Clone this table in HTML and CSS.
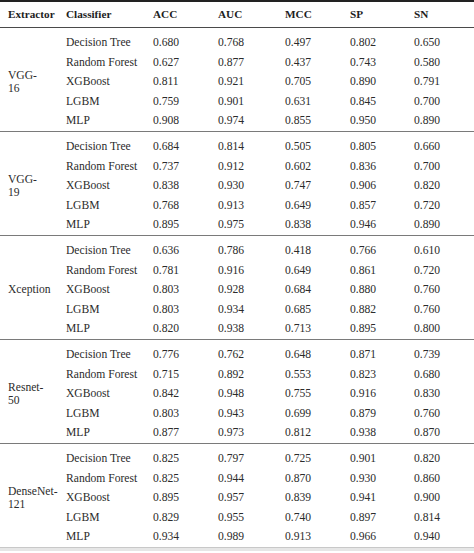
FILE: index.html
```html
<!DOCTYPE html>
<html>
<head>
<meta charset="utf-8">
<link rel="stylesheet" href="styles.css">
</head>
<body>
<div class="table">
  <div class="head">
    <div class="c ext">Extractor</div>
    <div class="c">Classifier</div>
    <div class="c">ACC</div>
    <div class="c">AUC</div>
    <div class="c">MCC</div>
    <div class="c">SP</div>
    <div class="c">SN</div>
  </div>

  <div class="section">
    <div class="c ext name">VGG-<br>16</div>
    <div class="c">Decision Tree</div><div class="c">0.680</div><div class="c">0.768</div><div class="c">0.497</div><div class="c">0.802</div><div class="c">0.650</div>
    <div class="c">Random Forest</div><div class="c">0.627</div><div class="c">0.877</div><div class="c">0.437</div><div class="c">0.743</div><div class="c">0.580</div>
    <div class="c">XGBoost</div><div class="c">0.811</div><div class="c">0.921</div><div class="c">0.705</div><div class="c">0.890</div><div class="c">0.791</div>
    <div class="c">LGBM</div><div class="c">0.759</div><div class="c">0.901</div><div class="c">0.631</div><div class="c">0.845</div><div class="c">0.700</div>
    <div class="c">MLP</div><div class="c">0.908</div><div class="c">0.974</div><div class="c">0.855</div><div class="c">0.950</div><div class="c">0.890</div>
  </div>

  <div class="section">
    <div class="c ext name">VGG-<br>19</div>
    <div class="c">Decision Tree</div><div class="c">0.684</div><div class="c">0.814</div><div class="c">0.505</div><div class="c">0.805</div><div class="c">0.660</div>
    <div class="c">Random Forest</div><div class="c">0.737</div><div class="c">0.912</div><div class="c">0.602</div><div class="c">0.836</div><div class="c">0.700</div>
    <div class="c">XGBoost</div><div class="c">0.838</div><div class="c">0.930</div><div class="c">0.747</div><div class="c">0.906</div><div class="c">0.820</div>
    <div class="c">LGBM</div><div class="c">0.768</div><div class="c">0.913</div><div class="c">0.649</div><div class="c">0.857</div><div class="c">0.720</div>
    <div class="c">MLP</div><div class="c">0.895</div><div class="c">0.975</div><div class="c">0.838</div><div class="c">0.946</div><div class="c">0.890</div>
  </div>

  <div class="section">
    <div class="c ext name">Xception</div>
    <div class="c">Decision Tree</div><div class="c">0.636</div><div class="c">0.786</div><div class="c">0.418</div><div class="c">0.766</div><div class="c">0.610</div>
    <div class="c">Random Forest</div><div class="c">0.781</div><div class="c">0.916</div><div class="c">0.649</div><div class="c">0.861</div><div class="c">0.720</div>
    <div class="c">XGBoost</div><div class="c">0.803</div><div class="c">0.928</div><div class="c">0.684</div><div class="c">0.880</div><div class="c">0.760</div>
    <div class="c">LGBM</div><div class="c">0.803</div><div class="c">0.934</div><div class="c">0.685</div><div class="c">0.882</div><div class="c">0.760</div>
    <div class="c">MLP</div><div class="c">0.820</div><div class="c">0.938</div><div class="c">0.713</div><div class="c">0.895</div><div class="c">0.800</div>
  </div>

  <div class="section">
    <div class="c ext name">Resnet-<br>50</div>
    <div class="c">Decision Tree</div><div class="c">0.776</div><div class="c">0.762</div><div class="c">0.648</div><div class="c">0.871</div><div class="c">0.739</div>
    <div class="c">Random Forest</div><div class="c">0.715</div><div class="c">0.892</div><div class="c">0.553</div><div class="c">0.823</div><div class="c">0.680</div>
    <div class="c">XGBoost</div><div class="c">0.842</div><div class="c">0.948</div><div class="c">0.755</div><div class="c">0.916</div><div class="c">0.830</div>
    <div class="c">LGBM</div><div class="c">0.803</div><div class="c">0.943</div><div class="c">0.699</div><div class="c">0.879</div><div class="c">0.760</div>
    <div class="c">MLP</div><div class="c">0.877</div><div class="c">0.973</div><div class="c">0.812</div><div class="c">0.938</div><div class="c">0.870</div>
  </div>

  <div class="section last">
    <div class="c ext name">DenseNet-<br>121</div>
    <div class="c">Decision Tree</div><div class="c">0.825</div><div class="c">0.797</div><div class="c">0.725</div><div class="c">0.901</div><div class="c">0.820</div>
    <div class="c">Random Forest</div><div class="c">0.825</div><div class="c">0.944</div><div class="c">0.870</div><div class="c">0.930</div><div class="c">0.860</div>
    <div class="c">XGBoost</div><div class="c">0.895</div><div class="c">0.957</div><div class="c">0.839</div><div class="c">0.941</div><div class="c">0.900</div>
    <div class="c">LGBM</div><div class="c">0.829</div><div class="c">0.955</div><div class="c">0.740</div><div class="c">0.897</div><div class="c">0.814</div>
    <div class="c">MLP</div><div class="c">0.934</div><div class="c">0.989</div><div class="c">0.913</div><div class="c">0.966</div><div class="c">0.940</div>
  </div>
  <div class="foot"></div>
</div>
</body>
</html>
```

FILE: styles.css
```css
html, body {
  margin: 0;
  padding: 0;
  background: #ffffff;
}

body {
  font-family: "Liberation Serif", "Times New Roman", serif;
  font-size: 11.6px;
  color: #2b2b2b;
}

.table {
  width: 474px;
  border-top: 2px solid #222222;
}

.head,
.section {
  display: grid;
  grid-template-columns: 60px 87px 65px 67px 65px 64px 66px;
}

.head {
  height: 25px;
  align-items: center;
  font-weight: bold;
  font-size: 11.2px;
  color: #1e1e1e;
  border-bottom: 1px solid #4a4a4a;
}

.section {
  grid-template-rows: repeat(5, 19.5px);
  grid-auto-flow: row;
  padding: 5px 0 0.5px;
  border-bottom: 1px solid #7a7a7a;
  align-items: center;
}

.section.last {
  border-bottom: 1px solid #c8c8c8;
}

.c {
  padding-left: 6px;
  white-space: nowrap;
  line-height: 13px;
}

.c.ext {
  padding-left: 8px;
}

.name {
  grid-column: 1;
  grid-row: 1 / span 5;
  align-self: center;
}

.foot {
  height: 3px;
  background: #e6e6e6;
}
```
